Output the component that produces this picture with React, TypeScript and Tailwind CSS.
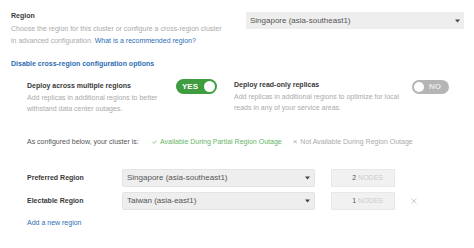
import React from "react";

const Caret = () => (
  <svg width="5" height="4" viewBox="0 0 5 4" className="shrink-0">
    <path d="M0 0.5 L5 0.5 L2.5 3.5 Z" fill="#444" />
  </svg>
);

type toggleProps = {
  on: boolean;
};

const Toggle = ({ on }: toggleProps) => {
  if (on) {
    return (
      <div className="flex h-[15px] w-[41px] shrink-0 items-center justify-between rounded-full bg-[#3f9c3f] pl-[6px] pr-[2px]">
        <span className="text-[8px] font-bold leading-none text-white">YES</span>
        <span className="h-[11px] w-[11px] rounded-full bg-white" />
      </div>
    );
  }
  return (
    <div className="flex h-[14px] w-[37px] shrink-0 items-center rounded-full bg-[#b5b5b5] pl-[2px]">
      <span className="h-[10px] w-[10px] rounded-full bg-white" />
      <span className="ml-[5px] text-[8px] font-bold leading-none text-[#e8e8e8]">NO</span>
    </div>
  );
};

type regionRow = {
  label: string;
  region: string;
  nodes: number;
  removable: boolean;
};

const rows: regionRow[] = [
  { label: "Preferred Region", region: "Singapore (asia-southeast1)", nodes: 2, removable: false },
  { label: "Electable Region", region: "Taiwan (asia-east1)", nodes: 1, removable: true },
];

export default function App() {
  return (
    <div className="h-[248px] w-[474px] overflow-hidden bg-white font-['Liberation_Sans',Arial,sans-serif] text-[7px]">
      {/* region header */}
      <div className="flex pl-[11px] pt-[10px]">
        <div className="w-[235px] shrink-0">
          <div className="font-bold leading-[12px] text-[#3a3a3a]">Region</div>
          <p className="mt-[1px] leading-[12px] text-[#aaaaaa]">
            Choose the region for this cluster or configure a cross-region cluster
            <br />
            in advanced configuration.{" "}
            <span className="text-[#2e6db4]">What is a recommended region?</span>
          </p>
          <div className="mt-[11px] font-bold leading-[12px] text-[#2e6db4]">
            Disable cross-region configuration options
          </div>
        </div>
        <div className="mt-[2px] flex h-[17px] w-[218px] items-center justify-between bg-[#eeeeee] pl-[4px] pr-[4px] text-[8px] text-[#555]">
          <span>Singapore (asia-southeast1)</span>
          <Caret />
        </div>
      </div>

      {/* deploy options */}
      <div className="mt-[9px] flex pl-[27px]">
        <div className="flex w-[190px] shrink-0 justify-between">
          <div className="pt-[1px]">
            <div className="font-bold leading-[12px] text-[#3a3a3a]">Deploy across multiple regions</div>
            <div className="leading-[11px] text-[#aaaaaa]">
              Add replicas in additional regions to better
              <br />
              withstand data center outages.
            </div>
          </div>
          <Toggle on={true} />
        </div>
        <div className="ml-[17px] flex w-[215px] shrink-0 justify-between">
          <div>
            <div className="font-bold leading-[12px] text-[#3a3a3a]">Deploy read-only replicas</div>
            <div className="leading-[11px] text-[#aaaaaa]">
              Add replicas in additional regions to optimize for local
              <br />
              reads in any of your service areas.
            </div>
          </div>
          <div className="pt-[1px]">
            <Toggle on={false} />
          </div>
        </div>
      </div>

      {/* availability summary */}
      <div className="mt-[22px] flex items-center pl-[27px] leading-[12px]">
        <span className="w-[125px] shrink-0 text-[#555]">As configured below, your cluster is:</span>
        <svg width="5" height="4" viewBox="0 0 5 4" className="shrink-0">
          <path d="M0.5 2 L2 3.3 L4.6 0.6" stroke="#6cb86c" strokeWidth="0.8" fill="none" />
        </svg>
        <span className="ml-[3px] text-[#66b466]">Available During Partial Region Outage</span>
        <span className="ml-[11px] text-[8px] text-[#aaa]">×</span>
        <span className="ml-[3px] text-[#aaaaaa]">Not Available During Region Outage</span>
      </div>

      {/* region rows */}
      <div className="mt-[21px] flex flex-col gap-[5px] pl-[27px]">
        {rows.map((row) => (
          <div key={row.label} className="flex h-[18px] items-center">
            <div className="w-[95px] shrink-0 font-bold text-[#3a3a3a]">{row.label}</div>
            <div className="flex h-[18px] w-[193px] items-center justify-between rounded-[2px] border border-[#e4e4e4] bg-[#eeeeee] pl-[4px] pr-[4px] text-[8px] text-[#555]">
              <span>{row.region}</span>
              <Caret />
            </div>
            <div className="ml-[16px] flex h-[18px] w-[64px] items-center justify-end border border-[#e8e8e8] bg-[#f1f1f1] pr-[11px]">
              <span className="text-[#555]">{row.nodes}</span>
              <span className="ml-[2px] text-[#cccccc]">NODES</span>
            </div>
            {row.removable && (
              <svg width="6" height="6" viewBox="0 0 6 6" className="ml-[16px] shrink-0">
                <path d="M0.5 0.5 L5.5 5.5 M5.5 0.5 L0.5 5.5" stroke="#b5b5b5" strokeWidth="0.7" />
              </svg>
            )}
          </div>
        ))}
        <div className="mt-[2px] leading-[12px] text-[#2e6db4]">Add a new region</div>
      </div>
    </div>
  );
}
